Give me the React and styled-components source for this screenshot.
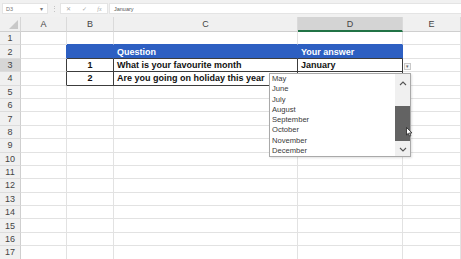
import React from "react";
import styled, { createGlobalStyle } from "styled-components";

const Global = createGlobalStyle`
  * { box-sizing: border-box; }
  html, body { margin: 0; padding: 0; background: #ffffff; overflow: hidden; }
  body { font-family: "Liberation Sans", Arial, sans-serif; }
`;

const Page = styled.div`
  width: 461px;
  height: 259px;
  display: flex;
  flex-direction: column;
  overflow: hidden;
`;

const FormulaBar = styled.div`
  height: 17px;
  flex: none;
  display: flex;
  align-items: center;
  background: #f1f1f1;
  padding: 0 0 0 2px;
`;

const Box = styled.div`
  height: 11px;
  background: #ffffff;
  display: flex;
  align-items: center;
  font-size: 5.5px;
  color: #555;
  border: 1px solid #e4e4e4;
`;

const NameBox = styled(Box)`
  width: 46px;
  padding: 0 4px 0 3px;
  justify-content: space-between;
  color: #777;
`;

const Dots = styled.div`
  width: 12px;
  display: flex;
  flex-direction: column;
  align-items: center;
  gap: 1.5px;
  & > span { width: 1px; height: 1px; background: #c4c4c4; }
`;

const FuncBox = styled(Box)`
  width: 48px;
  justify-content: space-around;
  color: #a8a8a8;
  font-size: 6px;
  margin-right: 1px;
`;

const Fx = styled.span`
  font-style: italic;
  font-family: "Liberation Serif", serif;
`;

const Input = styled(Box)`
  flex: 1;
  padding-left: 4px;
  border-right: none;
`;

const Sheet = styled.div`
  position: relative;
  flex: 1;
  display: grid;
  grid-template-columns: 21px 46px 47px 184px 105px 1fr;
  grid-template-rows: 15px repeat(17, 13.4px);
  font-size: 9px;
`;

const Cell = styled.div`
  display: flex;
  align-items: center;
  justify-content: ${(p) => (p.$center ? "center" : "flex-start")};
  padding: 0 3px;
  white-space: nowrap;
  overflow: visible;
  background: ${(p) => p.$bg || "#ffffff"};
  color: ${(p) => p.$color || "#111"};
  font-weight: ${(p) => (p.$bold ? 700 : 400)};
  border-right: ${(p) => p.$rw || 1}px solid ${(p) => p.$right || "#e2e2e2"};
  border-bottom: ${(p) => p.$bw || 1}px solid ${(p) => p.$bottom || "#e2e2e2"};
`;

const Corner = styled.div`
  position: relative;
  background: #f0f0f0;
  border-right: 1px solid #d6d6d6;
  border-bottom: 1px solid #cfcfcf;
  &::after {
    content: "";
    position: absolute;
    right: 2px;
    bottom: 2px;
    width: 0;
    height: 0;
    border-left: 9px solid transparent;
    border-bottom: 9px solid #c8c8c8;
  }
`;

const DropButton = styled.div`
  position: absolute;
  left: 404px;
  top: 46px;
  width: 7px;
  height: 7px;
  background: #f4f4f4;
  border: 1px solid #c9c9c9;
  display: flex;
  align-items: center;
  justify-content: center;
  font-size: 5px;
  color: #666;
  line-height: 1;
`;

const List = styled.div`
  position: absolute;
  left: 269px;
  top: 56px;
  width: 142px;
  height: 84px;
  background: #ffffff;
  border: 1px solid #a9a9a9;
  display: flex;
  box-shadow: 1px 1px 2px rgba(0, 0, 0, 0.12);
`;

const Items = styled.div`
  flex: 1;
  display: flex;
  flex-direction: column;
  padding-left: 2px;
`;

const Item = styled.div`
  height: 10.3px;
  line-height: 10.3px;
  font-size: 7.6px;
  color: #3a3a3a;
`;

const Scroll = styled.div`
  width: 15px;
  background: #f0f0f0;
  display: flex;
  flex-direction: column;
`;

const Arrow = styled.div`
  height: ${(p) => p.$h}px;
  display: flex;
  align-items: center;
  justify-content: center;
`;

const Track = styled.div`
  flex: 1;
  display: flex;
  flex-direction: column;
  padding-top: 14px;
`;

const Thumb = styled.div`
  height: 35px;
  background: #636363;
`;

const Cursor = styled.svg`
  position: absolute;
  left: 406px;
  top: 110px;
`;

const cols = ["A", "B", "C", "D", "E"];
const months = ["May", "June", "July", "August", "September", "October", "November", "December"];
const DARK = "#3c3c3c";
const BLUE = "#2d5fc2";

function cellProps(r, c) {
  const p = {};
  const inTableCol = c >= 1 && c <= 3;
  if (r === 2 && inTableCol) {
    p.$bg = BLUE;
    p.$color = "#ffffff";
    p.$bold = true;
    p.$right = BLUE;
    p.$bottom = DARK;
  }
  if ((r === 3 || r === 4) && inTableCol) {
    p.$right = DARK;
    p.$bottom = DARK;
    p.$bold = true;
  }
  if (c === 0 && r >= 2 && r <= 4) p.$right = r === 2 ? BLUE : DARK;
  if (r === 1 && inTableCol) p.$bottom = BLUE;
  if (c === 1 && (r === 3 || r === 4)) p.$center = true;
  return p;
}

const content = {
  "2-2": "Question",
  "2-3": "Your answer",
  "3-1": "1",
  "3-2": "What is your favourite month",
  "3-3": "January",
  "4-1": "2",
  "4-2": "Are you going on holiday this year",
};

export default function App() {
  const cells = [];
  cells.push(<Corner key="corner" />);
  cols.forEach((l) => {
    const active = l === "D";
    cells.push(
      <Cell
        key={"h" + l}
        $center
        $bg={active ? "#d4d4d4" : "#f0f0f0"}
        $color="#444"
        $right="#dadada"
        $bottom={active ? "#217346" : "#cfcfcf"}
        $bw={active ? 2 : 1}
      >
        {l}
      </Cell>
    );
  });
  for (let r = 1; r <= 17; r++) {
    const active = r === 3;
    cells.push(
      <Cell
        key={"r" + r}
        $center
        $bg={active ? "#d6d6d6" : "#f0f0f0"}
        $color="#444"
        $right="#cfcfcf"
        $bottom="#dcdcdc"
      >
        {r}
      </Cell>
    );
    for (let c = 0; c < 5; c++) {
      cells.push(
        <Cell key={r + "-" + c} {...cellProps(r, c)}>
          {content[r + "-" + c] || ""}
        </Cell>
      );
    }
  }

  return (
    <Page>
      <Global />
      <FormulaBar>
        <NameBox>
          <span>D3</span>
          <span>▾</span>
        </NameBox>
        <Dots>
          <span />
          <span />
          <span />
        </Dots>
        <FuncBox>
          <span>✕</span>
          <span>✓</span>
          <Fx>fx</Fx>
        </FuncBox>
        <Input>January</Input>
      </FormulaBar>
      <Sheet>
        {cells}
        <DropButton>▾</DropButton>
        <List>
          <Items>
            {months.map((m) => (
              <Item key={m}>{m}</Item>
            ))}
          </Items>
          <Scroll>
            <Arrow $h={18}>
              <svg width="8" height="5" viewBox="0 0 8 5">
                <path d="M1 4 L4 1 L7 4" fill="none" stroke="#555" strokeWidth="1.1" />
              </svg>
            </Arrow>
            <Track>
              <Thumb />
            </Track>
            <Arrow $h={14}>
              <svg width="8" height="5" viewBox="0 0 8 5">
                <path d="M1 1 L4 4 L7 1" fill="none" stroke="#555" strokeWidth="1.1" />
              </svg>
            </Arrow>
          </Scroll>
        </List>
        <Cursor width="7" height="10" viewBox="0 0 7 10">
          <path d="M0.5 0.5 L0.5 8 L2.3 6.3 L3.6 9.2 L4.8 8.7 L3.6 5.9 L6 5.9 Z" fill="#fff" stroke="#222" strokeWidth="0.8" />
        </Cursor>
      </Sheet>
    </Page>
  );
}
